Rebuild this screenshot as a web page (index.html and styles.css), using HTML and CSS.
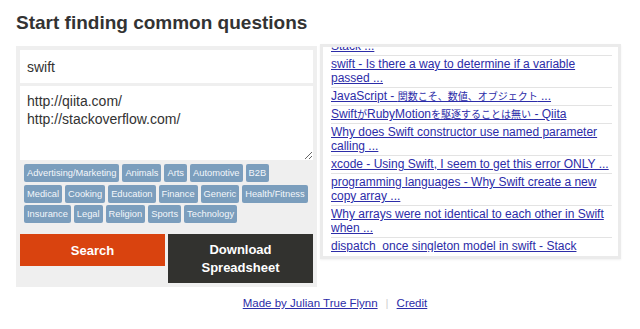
FILE: index.html
```html
<!DOCTYPE html>
<html lang="en">
<head>
<meta charset="utf-8">
<title>Start finding common questions</title>
<link rel="stylesheet" href="styles.css">
</head>
<body>
<div class="page">
  <h1 class="title">Start finding common questions</h1>
  <div class="main">
    <form class="search-panel">
      <input class="keyword" type="text" value="swift">
      <textarea class="sites">http://qiita.com/
http://stackoverflow.com/</textarea>
      <div class="tags">
        <div class="tag-row">
          <span class="tag">Advertising/Marketing</span>
          <span class="tag">Animals</span>
          <span class="tag">Arts</span>
          <span class="tag">Automotive</span>
          <span class="tag">B2B</span>
        </div>
        <div class="tag-row">
          <span class="tag">Medical</span>
          <span class="tag">Cooking</span>
          <span class="tag">Education</span>
          <span class="tag">Finance</span>
          <span class="tag">Generic</span>
          <span class="tag">Health/Fitness</span>
        </div>
        <div class="tag-row">
          <span class="tag">Insurance</span>
          <span class="tag">Legal</span>
          <span class="tag">Religion</span>
          <span class="tag">Sports</span>
          <span class="tag">Technology</span>
        </div>
      </div>
      <div class="actions">
        <button type="button" class="btn btn-search">Search</button>
        <button type="button" class="btn btn-download">Download<br>Spreadsheet</button>
      </div>
    </form>
    <div class="results">
      <div class="results-viewport">
        <ul class="result-list">
          <li><a href="#">Stack ...</a></li>
          <li><a href="#">swift - Is there a way to determine if a variable passed ...</a></li>
          <li><a href="#">JavaScript - <span class="ja">関数こそ、数値、オブジェクト</span> ...</a></li>
          <li><a href="#">Swift<span class="ja">が</span>RubyMotion<span class="ja">を駆逐することは無い</span> - Qiita</a></li>
          <li><a href="#">Why does Swift constructor use named parameter calling ...</a></li>
          <li><a href="#">xcode - Using Swift, I seem to get this error ONLY ...</a></li>
          <li><a href="#">programming languages - Why Swift create a new copy array ...</a></li>
          <li><a href="#">Why arrays were not identical to each other in Swift when ...</a></li>
          <li><a href="#">dispatch_once singleton model in swift - Stack Overflow</a></li>
          <li><a href="#">swift - How to use dispatch_once ...</a></li>
        </ul>
      </div>
    </div>
  </div>
  <footer class="footer">
    <a href="#">Made by Julian True Flynn</a><span class="sep">|</span><a href="#">Credit</a>
  </footer>
</div>
</body>
</html>
```

FILE: styles.css
```css
html, body {
  margin: 0;
  padding: 0;
  background: #ffffff;
}

body {
  font-family: "Liberation Sans", Arial, "Noto Sans CJK JP", sans-serif;
  color: #333333;
}

.page {
  padding: 12px 16px 0;
}

.title {
  margin: 0 0 10px;
  font-size: 19px;
  line-height: 22px;
  font-weight: bold;
  color: #333333;
}

.main {
  display: flex;
  align-items: flex-start;
  gap: 3px;
}

.search-panel {
  width: 301px;
  box-sizing: border-box;
  margin: 2px 0 0;
  padding: 4px;
  background: #efefef;
  display: flex;
  flex-direction: column;
}

.keyword {
  display: block;
  box-sizing: border-box;
  width: 100%;
  height: 33px;
  margin: 0;
  padding: 0 7px;
  border: none;
  outline: none;
  background: #ffffff;
  font-family: "Liberation Sans", Arial, sans-serif;
  font-size: 14px;
  color: #333333;
}

.sites {
  display: block;
  box-sizing: border-box;
  width: 100%;
  height: 74px;
  margin: 3px 0 0;
  padding: 6px 7px;
  border: none;
  outline: none;
  background: #ffffff;
  font-family: "Liberation Sans", Arial, sans-serif;
  font-size: 14px;
  line-height: 18px;
  color: #333333;
  resize: vertical;
}

.tags {
  margin: 4px 4px 0;
  display: flex;
  flex-direction: column;
  gap: 2.5px;
}

.tag-row {
  display: flex;
  gap: 3px;
}

.tag {
  display: block;
  height: 18px;
  line-height: 18px;
  padding: 0 3px;
  border-radius: 2px;
  background: #7b9ebd;
  color: #f4f7fb;
  font-size: 9.3px;
  white-space: nowrap;
}

.actions {
  display: grid;
  grid-template-columns: 1fr 1fr;
  align-items: start;
  gap: 3px;
  margin-top: 11px;
}

.btn {
  box-sizing: border-box;
  width: 100%;
  min-width: 0;
  margin: 0;
  padding: 0;
  border: none;
  color: #ffffff;
  font-family: "Liberation Sans", Arial, sans-serif;
  font-size: 13px;
  font-weight: bold;
  cursor: pointer;
}

.btn-search {
  height: 32px;
  background: #d9430f;
}

.btn-download {
  height: 49px;
  padding: 6px 0;
  line-height: 18px;
  background: #32322f;
}

.results {
  width: 301px;
  height: 215px;
  box-sizing: border-box;
  border: 3px solid #ebebeb;
  background: #ffffff;
  box-shadow: 0 1px 2px rgba(0, 0, 0, 0.06);
  padding: 0 6px 4px 8px;
}

.results-viewport {
  height: 205px;
  overflow: hidden;
}

.result-list {
  list-style: none;
  margin: -9px 0 0;
  padding: 0;
  width: 281px;
}

.result-list li {
  padding: 1px 0 2px;
  border-bottom: 1px solid #e3e3e3;
  font-size: 12px;
  line-height: 14px;
}

.result-list a {
  color: #2c2ca8;
  text-decoration: underline;
}

.ja {
  font-family: "Noto Sans CJK JP", sans-serif;
  font-size: 10px;
}

.footer {
  margin-top: 9px;
  padding-left: 30px;
  text-align: center;
  font-size: 11.5px;
  line-height: 14px;
}

.footer a {
  color: #2c2ca8;
  text-decoration: underline;
}

.sep {
  color: #d0d0d0;
  margin: 0 8px;
}
```
